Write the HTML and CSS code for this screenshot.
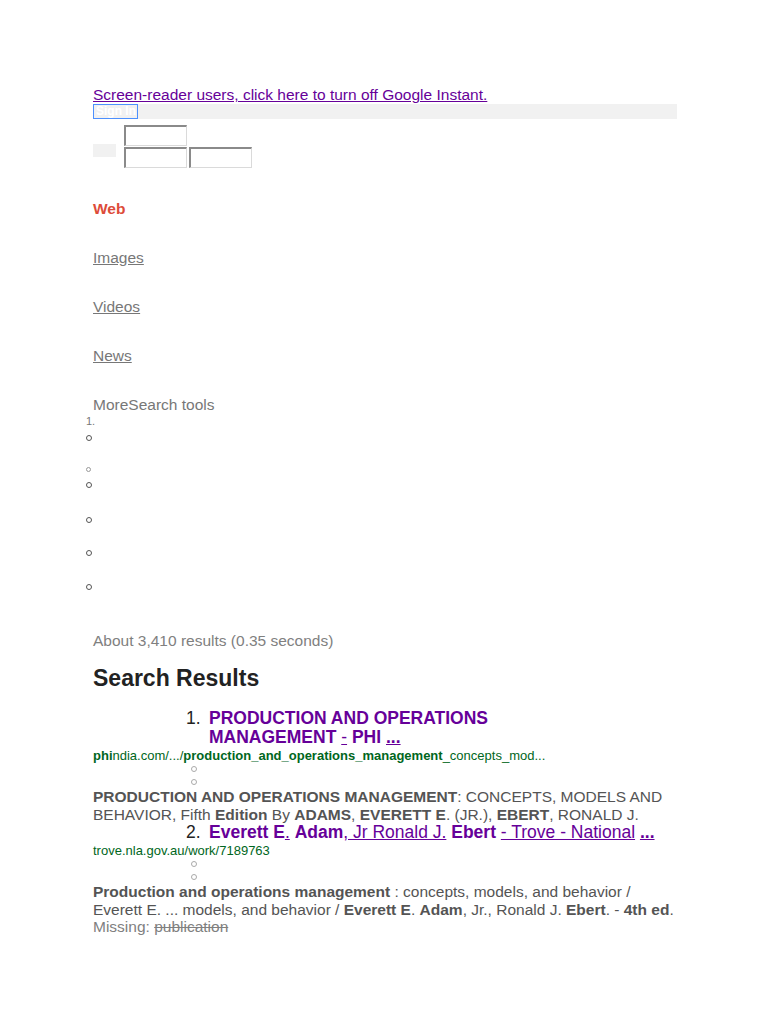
FILE: index.html
```html
<!DOCTYPE html>
<html>
<head>
<meta charset="utf-8">
<link rel="stylesheet" href="styles.css">
</head>
<body>
<div class="page">
  <a class="sr" href="#">Screen-reader users, click here to turn off Google Instant.</a>
  <div class="bar"><span class="signin">Sign In</span></div>
  <div class="form">
    <span class="gbox"></span>
    <div class="inputs">
      <div class="row"><span class="inp"></span></div>
      <div class="row"><span class="inp"></span><span class="inp"></span></div>
    </div>
  </div>
  <div class="nav">
    <div class="nav-item web">Web</div>
    <div class="nav-item"><a class="nl" href="#">Images</a></div>
    <div class="nav-item"><a class="nl" href="#">Videos</a></div>
    <div class="nav-item"><a class="nl" href="#">News</a></div>
    <div class="nav-item more">MoreSearch tools</div>
  </div>
  <div class="tools">
    <div class="num">1.</div>
    <div class="c c1"><span class="circ"></span></div>
    <div class="c c2"><span class="circ"></span></div>
    <div class="c c3"><span class="circ"></span></div>
    <div class="c c4"><span class="circ"></span></div>
    <div class="c c5"><span class="circ"></span></div>
    <div class="c c6"><span class="circ"></span></div>
  </div>
  <div class="stats">About 3,410 results (0.35 seconds)</div>
  <h2 class="heading">Search Results</h2>

  <div class="result r1">
    <div class="title-row">
      <span class="rn">1.</span>
      <a class="title" href="#"><b>PRODUCTION AND OPERATIONS<br>MANAGEMENT</b> <span class="u">-</span> <b>PHI</b> <span class="u"><b>...</b></span></a>
    </div>
    <div class="url"><b>phi</b>ndia.com/.../<b>production_and_operations_management</b>_concepts_mod...</div>
    <div class="subs"><span class="sc"></span><span class="sc"></span></div>
    <div class="snip"><b>PRODUCTION AND OPERATIONS MANAGEMENT</b>: CONCEPTS, MODELS AND BEHAVIOR, Fifth <b>Edition</b> By <b>ADAMS</b>, <b>EVERETT E</b>. (JR.), <b>EBERT</b>, RONALD J.</div>
  </div>

  <div class="result r2">
    <div class="title-row">
      <span class="rn">2.</span>
      <a class="title" href="#"><b>Everett E</b><span class="u">.</span> <b>Adam</b><span class="u">, Jr Ronald J.</span> <b>Ebert</b> <span class="u">- Trove - National</span> <span class="u"><b>...</b></span></a>
    </div>
    <div class="url">trove.nla.gov.au/work/7189763</div>
    <div class="subs"><span class="sc"></span><span class="sc"></span></div>
    <div class="snip"><b>Production and operations management</b> : concepts, models, and behavior / Everett E. ... models, and behavior / <b>Everett E</b>. <b>Adam</b>, Jr., Ronald J. <b>Ebert</b>. - <b>4th ed</b>.</div>
    <div class="missing">Missing: <s>publication</s></div>
  </div>
</div>
</body>
</html>
```

FILE: styles.css
```css
html, body {
  margin: 0;
  padding: 0;
  background: #fff;
}
body {
  font-family: "Liberation Sans", Arial, sans-serif;
  color: #222;
}
.page {
  width: 584px;
  margin-left: 93px;
  padding-top: 86px;
}
.sr {
  display: block;
  width: max-content;
  font-size: 15.5px;
  line-height: 18px;
  color: #660099;
  text-decoration: underline;
}
.bar {
  height: 15px;
  background: #f1f1f1;
  display: flex;
  align-items: center;
}
.signin {
  box-sizing: border-box;
  width: 45px;
  height: 15px;
  border: 1px solid #4d90fe;
  color: #fff;
  font-size: 12px;
  font-weight: bold;
  line-height: 13px;
  padding-left: 2px;
  overflow: hidden;
}
.form {
  display: flex;
  align-items: center;
  margin-top: 6px;
}
.gbox {
  width: 23px;
  height: 13px;
  background: #f1f1f1;
  margin-right: 8px;
  margin-top: 7px;
}
.inputs {
  display: flex;
  flex-direction: column;
  gap: 1px;
}
.row {
  display: flex;
  gap: 2px;
}
.inp {
  box-sizing: border-box;
  width: 63px;
  height: 21px;
  border-style: solid;
  border-width: 2px 1px 1px 2px;
  border-top-color: #8a8a8a;
  border-left-color: #8a8a8a;
  border-right-color: #dadada;
  border-bottom-color: #dadada;
}
.nav {
  margin-top: 32px;
}
.nav-item {
  font-size: 15.5px;
  line-height: 18px;
  margin-bottom: 31px;
  color: #777;
}
.nav-item.web {
  color: #dd4b39;
  font-weight: bold;
}
.nav-item.more {
  margin-bottom: 0;
}
.nl {
  color: #777;
  text-decoration: underline;
}
.tools {
  position: relative;
  margin-left: -8px;
  height: 218px;
}
.num {
  font-size: 11px;
  line-height: 14px;
  color: #777;
  margin-left: 1px;
}
.c {
  position: absolute;
  left: 1px;
}
.circ {
  display: block;
  box-sizing: border-box;
  width: 6px;
  height: 6px;
  border: 1px solid #555;
  border-radius: 50%;
}
.c1 { top: 21px; }
.c2 .circ { border-color: #999; width: 5px; height: 5px; }
.c2 { top: 53px; }
.c3 { top: 68px; }
.c4 { top: 103px; }
.c5 { top: 136px; }
.c6 { top: 170px; }
.stats {
  font-size: 15.5px;
  line-height: 18px;
  color: #808080;
}
.heading {
  margin: 14px 0 17px;
  font-size: 23px;
  line-height: 28px;
  font-weight: bold;
  color: #222;
}
.title-row {
  display: flex;
  align-items: flex-start;
  padding-left: 93px;
  font-size: 17.5px;
  line-height: 19px;
}
.rn {
  width: 23px;
  color: #222;
}
.title {
  color: #660099;
  text-decoration: none;
}
.u {
  text-decoration: underline;
}
.url {
  font-size: 13px;
  line-height: 17px;
  color: #006621;
}
.subs {
  display: flex;
  flex-direction: column;
  padding-left: 98px;
  padding-top: 2px;
  gap: 7px;
}
.sc {
  display: block;
  box-sizing: border-box;
  width: 6px;
  height: 6px;
  border: 1px solid #aaa;
  border-radius: 50%;
}
.snip {
  margin-top: 3px;
  font-size: 15.5px;
  line-height: 17.5px;
  color: #545454;
}
.missing {
  font-size: 15.5px;
  line-height: 17.5px;
  color: #808080;
}
```
